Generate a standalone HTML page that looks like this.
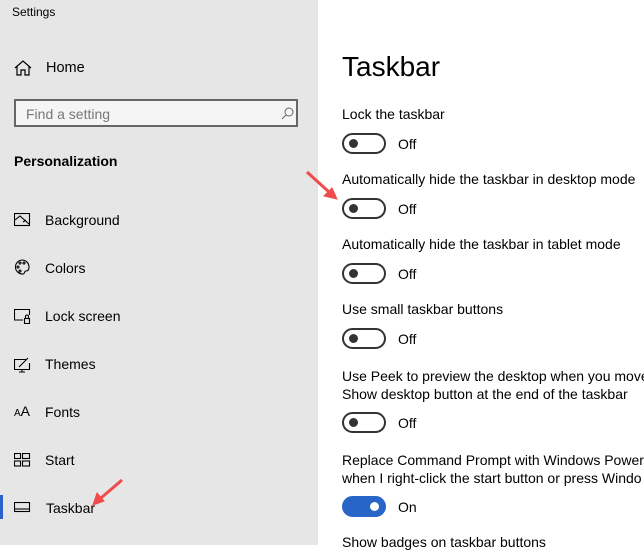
<!DOCTYPE html>
<html><head><style>
body{margin:0;width:644px;height:545px;overflow:hidden;font-family:"Liberation Sans",sans-serif;background:#fff;position:relative;color:#000}
.side{position:absolute;left:0;top:0;width:318px;height:545px;background:#e6e6e6}
.a{position:absolute;white-space:nowrap}
.t{font-size:14px}
.tg{position:absolute;left:342px;width:40px;height:17px;border:2px solid #333;border-radius:11px}
.tg::after{content:"";position:absolute;left:5px;top:4px;width:9px;height:9px;border-radius:50%;background:#333}
.on{background:#2865c8;border-color:#2865c8}
.on::after{left:26px;background:#fff}
.ic{position:absolute;left:14px}
</style></head><body>
<div class="side"></div>
<div class="a" style="left:12px;top:5px;font-size:12px">Settings</div>
<svg class="ic" style="top:60px" width="18" height="16" viewBox="0 0 18 16" fill="none" stroke="#000" stroke-width="1.2"><path d="M1 8L9 1l8 7M3 6v9h4v-5h4v5h4V6"/></svg>
<div class="a t" style="left:46px;top:60px;font-size:14.5px">Home</div>
<div class="a" style="left:14px;top:99px;width:284px;height:28px;border:2px solid #666;background:#f5f5f5;box-sizing:border-box"></div>
<div class="a t" style="left:26px;top:106px;color:#777">Find a setting</div>
<svg class="a" style="left:281px;top:107px" width="13" height="13" viewBox="0 0 13 13" fill="none" stroke="#666" stroke-width="1"><circle cx="8" cy="5" r="4"/><path d="M5 8L1 12"/></svg>
<div class="a" style="left:14px;top:153px;font-size:14px;font-weight:bold">Personalization</div>
<svg class="ic" style="top:213px" width="17" height="14" fill="none" stroke="#000" stroke-width="1.1"><rect x="0.5" y="0.5" width="15" height="12"/><path d="M1 7l5-4 9 8M9 9l3-2"/></svg>
<div class="a t" style="left:45px;top:212px">Background</div>
<svg class="ic" style="top:259px" width="16" height="16" fill="none" stroke="#000" stroke-width="1.1"><path d="M8 1a7 7 0 1 0 1 14c2 0 1-3 3-3s3-1 3-4A7 7 0 0 0 8 1z"/><circle cx="4" cy="8" r="1"/><circle cx="6" cy="4" r="1"/><circle cx="10" cy="4" r="1"/><circle cx="6" cy="12" r="1"/></svg>
<div class="a t" style="left:45px;top:260px">Colors</div>
<svg class="ic" style="top:309px" width="17" height="15" fill="none" stroke="#000" stroke-width="1.1"><path d="M9 11H0.5V0.5h15V6"/><rect x="10.5" y="9.5" width="5" height="5"/><path d="M11.5 9.5v-2a1.5 1.5 0 0 1 3 0v2"/></svg>
<div class="a t" style="left:45px;top:308px">Lock screen</div>
<svg class="ic" style="top:357px" width="17" height="16" fill="none" stroke="#000" stroke-width="1.1"><path d="M12 2.5H0.5v10h15V6M5 15h6M8 12.5V15M5 10l9-9"/></svg>
<div class="a t" style="left:45px;top:356px">Themes</div>
<div class="a" style="left:14px;top:403px;font-size:10px">A<span style="font-size:14px">A</span></div>
<div class="a t" style="left:45px;top:404px">Fonts</div>
<svg class="ic" style="top:453px" width="17" height="14" fill="none" stroke="#000" stroke-width="1.1"><rect x="0.5" y="0.5" width="6" height="5"/><rect x="8.5" y="0.5" width="7" height="5"/><rect x="0.5" y="8" width="6" height="5"/><rect x="8.5" y="8" width="7" height="5"/></svg>
<div class="a t" style="left:45px;top:452px">Start</div>
<div class="a" style="left:0;top:495px;width:3px;height:24px;background:#2a62c9"></div>
<svg class="ic" style="top:502px" width="17" height="11" fill="none" stroke="#000" stroke-width="1.1"><rect x="0.5" y="0.5" width="15" height="9"/><path d="M1 7h14"/></svg>
<div class="a t" style="left:46px;top:500px">Taskbar</div>
<svg class="a" style="left:0;top:0" width="644" height="545"><g stroke="#f04a4a" stroke-width="3" fill="#f04a4a"><path d="M307 172L329 192"/><path d="M337 199l-13-3 8-8z" stroke-width="1"/><path d="M122 480L101 498"/><path d="M93 505l4-12 7 8z" stroke-width="1"/></g></svg>
<div class="a" style="left:342px;top:51px;font-size:28px">Taskbar</div>
<div class="a t" style="left:342px;top:106px">Lock the taskbar</div>
<div class="tg" style="top:133px"></div><div class="a t" style="left:398px;top:136px">Off</div>
<div class="a t" style="left:342px;top:171px">Automatically hide the taskbar in desktop mode</div>
<div class="tg" style="top:198px"></div><div class="a t" style="left:398px;top:201px">Off</div>
<div class="a t" style="left:342px;top:236px">Automatically hide the taskbar in tablet mode</div>
<div class="tg" style="top:263px"></div><div class="a t" style="left:398px;top:266px">Off</div>
<div class="a t" style="left:342px;top:301px">Use small taskbar buttons</div>
<div class="tg" style="top:328px"></div><div class="a t" style="left:398px;top:331px">Off</div>
<div class="a t" style="left:342px;top:367px;line-height:18px">Use Peek to preview the desktop when you move<br>Show desktop button at the end of the taskbar</div>
<div class="tg" style="top:412px"></div><div class="a t" style="left:398px;top:415px">Off</div>
<div class="a t" style="left:342px;top:451px;line-height:18px">Replace Command Prompt with Windows PowerS<br>when I right-click the start button or press Windo</div>
<div class="tg on" style="top:496px"></div><div class="a t" style="left:398px;top:499px">On</div>
<div class="a t" style="left:342px;top:534px">Show badges on taskbar buttons</div>
</body></html>
